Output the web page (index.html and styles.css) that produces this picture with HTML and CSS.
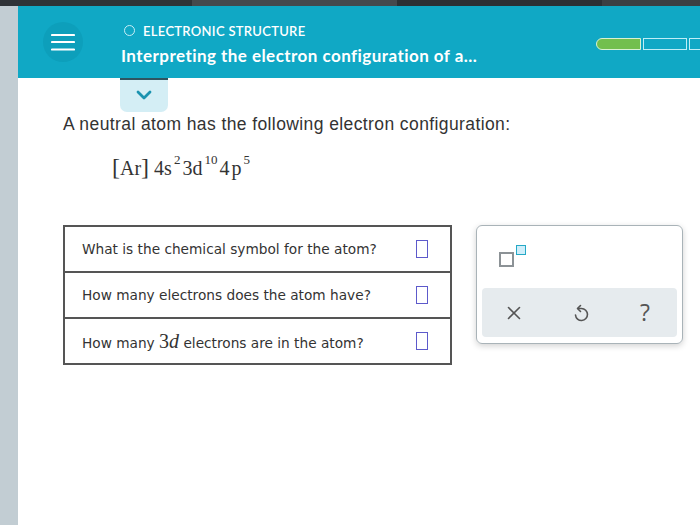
FILE: index.html
```html
<!DOCTYPE html>
<html>
<head>
<meta charset="utf-8">
<link rel="stylesheet" href="styles.css">
</head>
<body>
<div class="topstrip">
  <span class="ts ts1"></span><span class="ts ts2"></span><span class="ts ts3"></span><span class="ts ts4"></span>
</div>
<div class="frame">
  <div class="sidebar"></div>
  <div class="main">
    <header class="header">
      <div class="menu">
        <svg width="24" height="18" viewBox="0 0 24 18"><g stroke="#fff" stroke-width="2.2" stroke-linecap="round"><line x1="1" y1="2" x2="23" y2="2"/><line x1="1" y1="9" x2="23" y2="9"/><line x1="1" y1="16.5" x2="23" y2="16.5"/></g></svg>
      </div>
      <div class="titles">
        <div class="topic"><span class="ring"></span>ELECTRONIC STRUCTURE</div>
        <div class="title">Interpreting the electron configuration of a...</div>
      </div>
      <div class="progress">
        <span class="seg done"></span><span class="seg"></span><span class="seg"></span>
      </div>
    </header>
    <div class="content">
      <div class="tab">
        <svg width="16" height="10" viewBox="0 0 16 10"><path d="M2 2l6 6 6-6" fill="none" stroke="#1b93b0" stroke-width="2.8" stroke-linecap="round" stroke-linejoin="round"/></svg>
      </div>
      <p class="prompt">A neutral atom has the following electron configuration:</p>
      <div class="formula"><span class="br">[</span>Ar<span class="br">]</span> 4s<sup>2</sup>3d<sup>10</sup>4<span class="p">p</span><sup>5</sup></div>
      <div class="work">
        <div class="qtable">
          <div class="qrow"><span>What is the chemical symbol for the atom?</span><span class="ans"></span></div>
          <div class="qrow"><span>How many electrons does the atom have?</span><span class="ans"></span></div>
          <div class="qrow"><span>How many <span class="math">3<i>d</i></span> electrons are in the atom?</span><span class="ans"></span></div>
        </div>
        <div class="panel">
          <div class="tools">
            <span class="supicon"><span class="big"></span><span class="small"></span></span>
          </div>
          <div class="btnbar">
            <svg width="14" height="14" viewBox="0 0 14 14"><g stroke="#555" stroke-width="1.6" stroke-linecap="round"><line x1="1.5" y1="1.5" x2="12.5" y2="12.5"/><line x1="12.5" y1="1.5" x2="1.5" y2="12.5"/></g></svg>
            <svg width="16" height="20" viewBox="0 0 16 20"><g fill="none" stroke="#555" stroke-width="1.6" stroke-linecap="round" stroke-linejoin="round"><path d="M5 5.5h3.5a6 6 0 1 1-6 6.5"/><path d="M7.5 2.5l-3 3 3 3"/></g></svg>
            <span class="help">?</span>
          </div>
        </div>
      </div>
    </div>
  </div>
</div>
</body>
</html>
```
FILE: styles.css
```css
html, body {
  margin: 0;
  padding: 0;
  height: 100%;
  overflow: hidden;
  background: #fff;
}
body {
  display: flex;
  flex-direction: column;
  width: 700px;
}
.topstrip {
  display: flex;
  height: 6px;
  flex: none;
}
.ts { display: block; height: 100%; }
.ts1 { width: 192px; background: #2f3337; }
.ts2 { width: 205px; background: #45494d; }
.ts3 { width: 205px; background: #2c3034; }
.ts4 { flex: 1; background: #3b3f43; }
.frame {
  display: flex;
  flex: 1;
}
.sidebar {
  width: 18px;
  flex: none;
  background: #c2cdd3;
}
.main {
  flex: 1;
  min-width: 0;
}
.header {
  height: 72px;
  background: #10a8c5;
  display: flex;
  align-items: center;
  padding-left: 25px;
  overflow: hidden;
}
.menu {
  width: 40px;
  height: 40px;
  border-radius: 50%;
  background: #0d9fbb;
  display: flex;
  align-items: center;
  justify-content: center;
  flex: none;
}
.titles {
  margin-left: 38px;
  color: #fff;
  font-family: Lato, "Open Sans", sans-serif;
  display: flex;
  flex-direction: column;
  margin-top: 4px;
}
.topic {
  font-size: 13px;
  font-weight: 600;
  display: flex;
  align-items: center;
  letter-spacing: 0.3px;
  margin-left: 3px;
  line-height: 18px;
}
.ring {
  width: 9px;
  height: 9px;
  border: 1.6px solid #c9eef6;
  border-radius: 50%;
  margin-right: 8px;
}
.title {
  font-size: 17px;
  font-weight: 700;
  line-height: 22px;
  margin-top: 5px;
  white-space: nowrap;
  letter-spacing: 0.45px;
}
.progress {
  margin-left: auto;
  display: flex;
  gap: 2px;
  flex: none;
  width: 104px;
  margin-top: 3px;
}
.seg {
  display: block;
  width: 44px;
  height: 12px;
  box-sizing: border-box;
  border: 1.5px solid #bfeef7;
  flex: none;
}
.seg.done {
  width: 45px;
  background: #72bf4e;
  border-color: #d9f1d0;
  border-radius: 6px 0 0 6px;
}
.content {
  padding-left: 45px;
}
.tab {
  width: 48px;
  height: 32px;
  margin-left: 57px;
  background: #d4eef5;
  border-top: 2px solid #2e5560;
  border-radius: 0 0 7px 7px;
  display: flex;
  align-items: center;
  justify-content: center;
}
.tab svg { margin-top: -2px; }
.prompt {
  margin: 1px 0 0;
  font-family: "Liberation Sans", Arial, sans-serif;
  font-size: 17.5px;
  letter-spacing: 0.4px;
  color: #333;
  line-height: 22px;
}
.formula {
  margin: 18px 0 0 49px;
  font-family: "Liberation Serif", "Times New Roman", serif;
  font-size: 20px;
  color: #333;
  line-height: 28px;
}
.formula .br { font-size: 24px; }
.formula sup {
  font-size: 13px;
  vertical-align: 0;
  position: relative;
  top: -11px;
  margin: 0 2px;
}
.formula .p { margin-left: 2px; }
.work {
  display: flex;
  align-items: flex-start;
  gap: 24px;
  margin-top: 40px;
}
.qtable {
  width: 389px;
  box-sizing: border-box;
  border: 2px solid #555;
  font-family: "DejaVu Sans", Verdana, sans-serif;
  font-size: 13.7px;
  color: #333;
}
.qrow {
  height: 44px;
  display: flex;
  align-items: center;
  justify-content: space-between;
  padding: 0 22px 0 17px;
}
.qrow + .qrow { border-top: 2px solid #555; }
.ans {
  width: 12px;
  height: 18px;
  box-sizing: border-box;
  border: 1.6px solid #5d5acb;
  flex: none;
}
.math {
  font-family: "Liberation Serif", "Times New Roman", serif;
  font-size: 20px;
}
.panel {
  width: 207px;
  height: 119px;
  box-sizing: border-box;
  border: 1px solid #a9b3b8;
  border-radius: 6px;
  box-shadow: 0 2px 6px rgba(0,0,0,0.18);
  padding: 0 5px 6px;
  display: flex;
  flex-direction: column;
}
.tools {
  height: 62px;
  padding: 19px 0 0 17px;
  box-sizing: border-box;
}
.supicon {
  display: flex;
  align-items: flex-start;
}
.supicon .big {
  margin-top: 7px;
  width: 15px;
  height: 15px;
  box-sizing: border-box;
  border: 2px solid #8c9296;
}
.supicon .small {
  margin-left: 2px;
  width: 10px;
  height: 10px;
  box-sizing: border-box;
  border: 1.6px solid #25a9c6;
  background: #cfeefa;
}
.btnbar {
  flex: 1;
  background: #e6ebee;
  border-radius: 4px;
  display: flex;
  align-items: center;
  justify-content: space-between;
  padding: 0 27px 0 25px;
}
.help {
  font-family: "Open Sans", sans-serif;
  font-weight: 400;
  font-size: 23px;
  color: #555;
  line-height: 1;
}
```
